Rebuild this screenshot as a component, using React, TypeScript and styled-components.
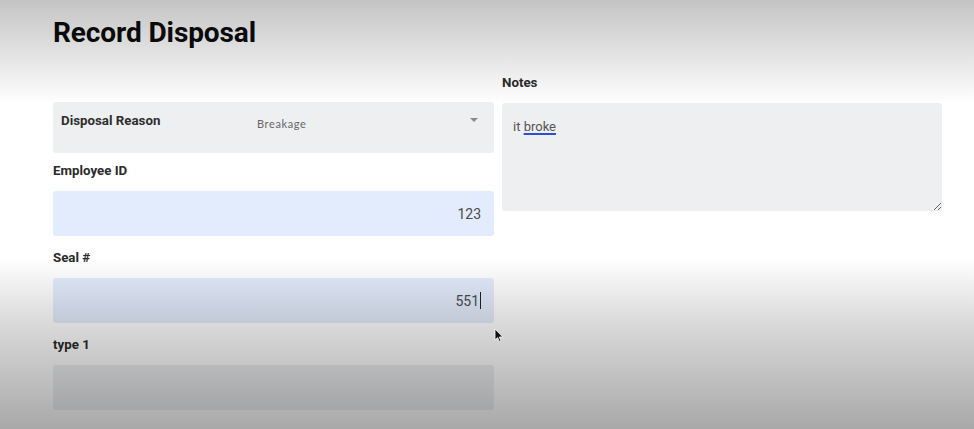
import React from "react";
import styled, { createGlobalStyle } from "styled-components";

const GlobalStyle = createGlobalStyle`
  html, body {
    margin: 0;
    padding: 0;
    background: #ffffff;
  }
  body {
    font-family: Roboto, "Liberation Sans", Arial, sans-serif;
    color: #222;
  }
`;

const Page = styled.div`
  position: relative;
  width: 974px;
  height: 429px;
  overflow: hidden;
  padding: 16px 32px 0 53px;
  box-sizing: border-box;
`;

const Title = styled.h1`
  margin: 0;
  font-size: 28px;
  line-height: 34px;
  font-weight: 700;
  color: #0c0c0c;
  letter-spacing: -0.1px;
`;

const FormGrid = styled.div`
  display: grid;
  grid-template-columns: 441px 440px;
  column-gap: 8px;
  margin-top: 22px;
  align-items: start;
`;

const Column = styled.div<{ $offset?: number }>`
  display: flex;
  flex-direction: column;
  padding-top: ${(p) => p.$offset ?? 0}px;
`;

const Label = styled.div<{ $top?: number }>`
  font-size: 13.3px;
  line-height: 20px;
  font-weight: 700;
  color: #2a2a2a;
  margin-top: ${(p) => p.$top ?? 0}px;
  margin-bottom: 10px;
`;

const SelectBox = styled.div`
  position: relative;
  display: flex;
  align-items: flex-start;
  height: 51px;
  box-sizing: border-box;
  padding: 10px 16px 0 8px;
  background: #eeeff1;
  border-radius: 3px;
`;

const SelectLabel = styled.span`
  width: 196px;
  flex-shrink: 0;
  font-size: 13.3px;
  line-height: 18px;
  font-weight: 700;
  color: #2e2e2e;
`;

const SelectValue = styled.span`
  flex: 1;
  margin-top: 3px;
  font-family: Lato, "Open Sans", sans-serif;
  font-size: 11px;
  line-height: 18px;
  letter-spacing: 0.6px;
  color: #666;
`;

const Caret = styled.span`
  margin-top: 6px;
  width: 0;
  height: 0;
  border-left: 4px solid transparent;
  border-right: 4px solid transparent;
  border-top: 4px solid #8a8a8a;
`;

const InputBox = styled.div<{ $tone: "blue" | "grey" }>`
  display: flex;
  align-items: center;
  justify-content: flex-end;
  height: 45px;
  box-sizing: border-box;
  padding: 0 13px;
  border-radius: 3px;
  background: ${(p) => (p.$tone === "blue" ? "#e3ecfc" : "#eeeff1")};
  font-size: 14px;
  color: #4a4a4a;
`;

const TextCaret = styled.span`
  display: inline-block;
  width: 1px;
  height: 17px;
  margin-left: 1px;
  background: #222;
`;

const NotesBox = styled.div`
  height: 108px;
  box-sizing: border-box;
  padding: 15px 11px 11px;
  background: #eeeff1;
  border-radius: 3px;
  font-size: 13px;
  line-height: 18px;
  color: #555;
  resize: vertical;
  overflow: auto;
`;

const Composing = styled.span`
  text-decoration: underline;
  text-decoration-color: #2f4ed6;
  text-decoration-thickness: 2px;
  text-underline-offset: 2px;
`;

const Vignette = styled.div`
  position: absolute;
  inset: 0;
  pointer-events: none;
  background:
    linear-gradient(
      to bottom,
      rgba(0, 0, 0, 0.23) 0px,
      rgba(0, 0, 0, 0.12) 50px,
      rgba(0, 0, 0, 0) 104px
    ),
    linear-gradient(
      to bottom,
      rgba(0, 0, 0, 0) 258px,
      rgba(0, 0, 0, 0.14) 320px,
      rgba(0, 0, 0, 0.34) 429px
    );
`;

const Pointer = styled.svg`
  position: absolute;
  left: 494px;
  top: 328px;
`;

export default function App() {
  return (
    <>
      <GlobalStyle />
      <Page>
        <Title>Record Disposal</Title>
        <FormGrid>
          <Column $offset={30}>
            <SelectBox>
              <SelectLabel>Disposal Reason</SelectLabel>
              <SelectValue>Breakage</SelectValue>
              <Caret />
            </SelectBox>

            <Label $top={8}>Employee ID</Label>
            <InputBox $tone="blue">123</InputBox>

            <Label $top={12}>Seal #</Label>
            <InputBox $tone="blue">
              551
              <TextCaret />
            </InputBox>

            <Label $top={12}>type 1</Label>
            <InputBox $tone="grey" />
          </Column>

          <Column>
            <Label $top={1}>Notes</Label>
            <NotesBox>
              it <Composing>broke</Composing>
            </NotesBox>
          </Column>
        </FormGrid>
        <Vignette />
        <Pointer width="10" height="15" viewBox="0 0 10 15">
          <path
            d="M1 1 L1 12 L3.6 9.6 L5.4 13.6 L7 12.9 L5.3 9 L8.8 9 Z"
            fill="#111"
            stroke="#fff"
            strokeWidth="0.8"
          />
        </Pointer>
      </Page>
    </>
  );
}
